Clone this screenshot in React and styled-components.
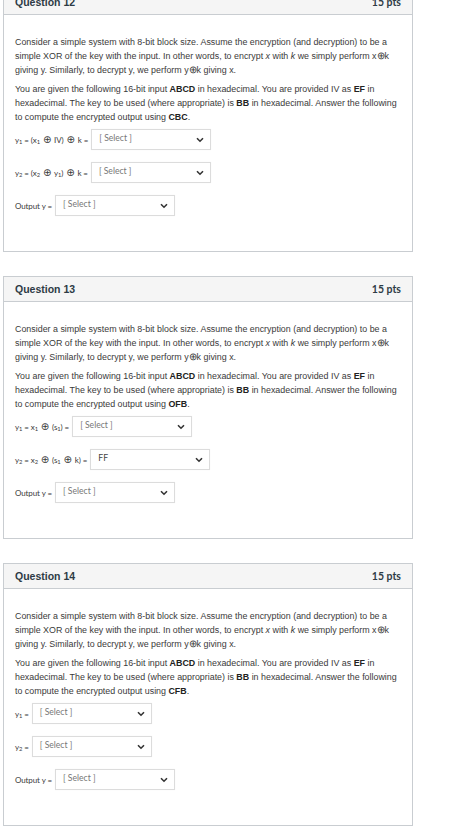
import React from "react";
import styled, { createGlobalStyle } from "styled-components";

const Global = createGlobalStyle`
  html, body { margin: 0; padding: 0; background: #ffffff; }
  body { font-family: "Liberation Sans", Arial, sans-serif; overflow: hidden; }
`;

const Page = styled.div`
  display: flex;
  flex-direction: column;
  gap: 24px;
  padding-left: 3px;
  margin-top: -11px;
`;

const Card = styled.section`
  width: 408px;
  border: 1px solid #c9cdd1;
  background: #fff;
`;

const Header = styled.header`
  height: 24px;
  display: flex;
  align-items: center;
  justify-content: space-between;
  padding: 0 11px;
  background: #f5f5f5;
  border-bottom: 1px solid #c9cdd1;
`;

const Title = styled.h3`
  margin: 0;
  font-family: "Liberation Sans", Arial, sans-serif;
  font-size: 10.5px;
  font-weight: 700;
  color: #2d3b45;
`;

const Points = styled.span`
  font-family: Lato, "Liberation Sans", sans-serif;
  font-size: 10.5px;
  font-weight: 700;
  color: #2d3b45;
`;

const Body = styled.div`
  padding: 20px 11px 35px;
  display: flex;
  flex-direction: column;
`;

const Para = styled.p`
  margin: 0 0 5px;
  font-family: "Liberation Sans", Arial, sans-serif;
  font-size: 8.9px;
  line-height: 14px;
  color: #3a3a3a;
  b { font-weight: 700; color: #222; }
  i { font-style: italic; }
`;

const TextXor = styled.span`
  font-family: "DejaVu Sans", sans-serif;
  font-size: 9.5px;
  font-weight: 300;
  line-height: 0;
`;

const Rows = styled.div`
  display: flex;
  flex-direction: column;
  gap: 12px;
`;

const Row = styled.div`
  display: flex;
  align-items: center;
  gap: 3px;
  height: 21px;
`;

const Label = styled.span`
  font-family: Lato, "Open Sans", sans-serif;
  font-size: 8px;
  letter-spacing: -0.1px;
  color: #3a3a3a;
  white-space: nowrap;
  sub { font-size: 5.8px; vertical-align: -1px; line-height: 0; }
`;

const Xor = styled.span`
  font-size: 10px;
  font-family: "DejaVu Sans", sans-serif;
  margin: 0 1px;
`;

const SelectBox = styled.div`
  box-sizing: border-box;
  width: 120px;
  height: 21px;
  display: flex;
  align-items: center;
  justify-content: space-between;
  padding: 0 6px 3px 7px;
  border: 1px solid #dcdcdc;
  box-shadow: 0 0 1px rgba(0,0,0,0.06);
  background: #fff;
  font-family: Lato, "Open Sans", sans-serif;
  font-size: 8.6px;
  color: ${(p) => (p.$filled ? "#444" : "#777")};
`;

const Chevron = () => (
  <svg width="8" height="6" viewBox="0 0 8 6" style={{ marginTop: 3 }}>
    <path d="M1 1.2 L4 4.2 L7 1.2" fill="none" stroke="#333" strokeWidth="1.6" />
  </svg>
);

const Select = ({ value }) => (
  <SelectBox $filled={!!value}>
    <span>{value || "[ Select ]"}</span>
    <Chevron />
  </SelectBox>
);

const X = () => <Xor>⊕</Xor>;

const Intro = ({ mode }) => (
  <>
    <Para>
      Consider a simple system with 8-bit block size. Assume the encryption (and decryption) to be a
      simple XOR of the key with the input. In other words, to encrypt <i>x</i> with <i>k</i> we simply perform x<TextXor>⊕</TextXor>k
      giving y. Similarly, to decrypt y, we perform y<TextXor>⊕</TextXor>k giving x.
    </Para>
    <Para>
      You are given the following 16-bit input <b>ABCD</b> in hexadecimal. You are provided IV as <b>EF</b> in
      hexadecimal. The key to be used (where appropriate) is <b>BB</b> in hexadecimal. Answer the following
      to compute the encrypted output using <b>{mode}</b>.
    </Para>
  </>
);

const Question = ({ num, mode, rows }) => (
  <Card>
    <Header>
      <Title>Question {num}</Title>
      <Points>15 pts</Points>
    </Header>
    <Body>
      <Intro mode={mode} />
      <Rows>
        {rows.map((r, i) => (
          <Row key={i}>
            <Label>{r.label}</Label>
            <Select value={r.value} />
          </Row>
        ))}
      </Rows>
    </Body>
  </Card>
);

const q12 = [
  { label: <>y<sub>1</sub> = (x<sub>1</sub> <X /> IV) <X /> k =</> },
  { label: <>y<sub>2</sub> = (x<sub>2</sub> <X /> y<sub>1</sub>) <X /> k =</> },
  { label: <>Output y =</> },
];
const q13 = [
  { label: <>y<sub>1</sub> = x<sub>1</sub> <X /> (s<sub>1</sub>) =</> },
  { label: <>y<sub>2</sub> = x<sub>2</sub> <X /> (s<sub>1</sub> <X /> k) =</>, value: "FF" },
  { label: <>Output y =</> },
];
const q14 = [
  { label: <>y<sub>1</sub> =</> },
  { label: <>y<sub>2</sub> =</> },
  { label: <>Output y =</> },
];

export default function App() {
  return (
    <>
      <Global />
      <Page>
        <Question num={12} mode="CBC" rows={q12} />
        <Question num={13} mode="OFB" rows={q13} />
        <Question num={14} mode="CFB" rows={q14} />
      </Page>
    </>
  );
}
